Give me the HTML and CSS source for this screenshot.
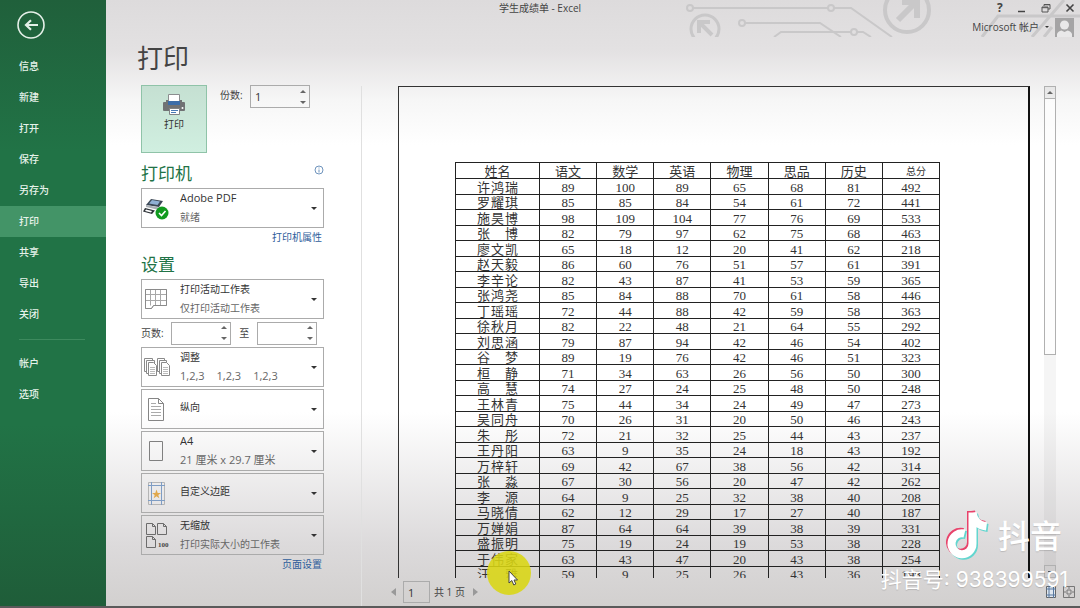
FILE: index.html
```html
<!DOCTYPE html>
<html lang="zh-CN">
<head>
    <meta charset="UTF-8">
    <meta name="viewport" content="width=device-width, initial-scale=1.0">

    <title>学生成绩单 - Excel</title>
    <link rel="stylesheet" href="styles.css">
</head>
<body>
<div class="app">
    <nav class="sidebar">
        <button class="back" aria-label="返回">
            <svg width="28" height="28" viewBox="0 0 28 28" fill="none" stroke="#e4f0e8">
                <circle cx="14" cy="14" r="13" stroke-width="1.6"/>
                <path d="M21 14H9M14 9.3L9 14l5 4.7" stroke-width="2.2"/>
            </svg>
        </button>
        <a href="#" class="item">信息</a>
        <a href="#" class="item">新建</a>
        <a href="#" class="item">打开</a>
        <a href="#" class="item">保存</a>
        <a href="#" class="item">另存为</a>
        <a href="#" class="item active">打印</a>
        <a href="#" class="item">共享</a>
        <a href="#" class="item">导出</a>
        <a href="#" class="item">关闭</a>
        <hr class="sep">
        <a href="#" class="item">帐户</a>
        <a href="#" class="item">选项</a>
    </nav>

    <main class="main">
        <header class="topbar">
            <svg class="circuit" width="400" height="37" viewBox="0 0 400 37" fill="none" stroke="#c9c8c9" stroke-width="2">
                <circle cx="10" cy="8" r="3"/>
                <path d="M13 8H148M154 8H171L212 37"/>
                <circle cx="151" cy="8" r="3"/>
                <circle cx="62" cy="23" r="3"/>
                <path d="M65 23H140L161 37M94 37L101 32H171M177 32H183L191 37"/>
                <circle cx="174" cy="32" r="3"/>
                <circle cx="25" cy="29" r="14" stroke-width="3"/>
                <path d="M32 35L20 23M19 33V22H30" stroke-width="4"/>
                <circle cx="227" cy="10" r="22" stroke-width="4"/>
                <path d="M218 20L235 3M222 2H237V18" stroke-width="6"/>
                <path d="M302 37L318 16H400M352 37L384 0M364 37L372 27" stroke-width="3"/>
            </svg>
            <span class="title">学生成绩单 - Excel</span>
            <div class="window-buttons">
                <button aria-label="帮助">?</button>
                <button aria-label="最小化"><svg width="10" height="10" viewBox="0 0 10 10"><path d="M1 8.5H8" stroke="#444" stroke-width="1.5"/></svg></button>
                <button aria-label="还原"><svg width="10" height="10" viewBox="0 0 10 10" fill="none" stroke="#555"><path d="M3 3V1.5H9V6H7M3 1.8H9"/><path d="M1 4H7V9H1ZM1 4.7H7"/></svg></button>
                <button aria-label="关闭"><svg width="10" height="10" viewBox="0 0 10 10"><path d="M1.5 1.5L8.5 8.5M8.5 1.5L1.5 8.5" stroke="#444" stroke-width="1.6"/></svg></button>
            </div>
            <button class="account">
                Microsoft 帐户
                <span class="caret small"></span>
                <svg width="19" height="19" viewBox="0 0 19 19">
                    <path d="M0 0H19V19H0Z" fill="#a5a4a5"/>
                    <circle cx="9.500" cy="7" r="4.500" fill="#e9e8e9"/>
                    <path d="M2 19V16Q3 13 6.500 12.500L9.500 14L12.500 12.500Q16 13 17 16V19Z" fill="#e9e8e9"/>
                </svg>
            </button>
        </header>

        <h1>打印</h1>

        <div class="columns">
            <section class="settings">
                <div class="print-row">
                    <button class="print">
                        <svg width="24" height="22" viewBox="0 0 24 22">
                            <path d="M2 8H22Q23 8 23 9V16Q23 17 22 17H2Q1 17 1 16V9Q1 8 2 8Z" fill="#707274"/>
                            <path d="M4 6H20V10H4Z" fill="#707274"/>
                            <path d="M6.500 .5H17.500V8H6.500Z" fill="#fff" stroke="#8b8d8f"/>
                            <path d="M6 7H18V11H6Z" fill="#3c6da8"/>
                            <path d="M7.500 14.500H17.500V20.500H7.500Z" fill="#fff" stroke="#808284"/>
                            <path d="M9 16.500H16M9 18.500H14" stroke="#4a7ab5"/>
                            <circle cx="20.500" cy="14" r="1" fill="#fff"/>
                        </svg>
                        打印
                    </button>
                    <label for="copies">份数:</label>
                    <div class="spin"><input id="copies" type="number" value="1"><span class="arrows"></span></div>
                </div>

                <div class="heading">
                    <h2>打印机</h2>
                    <svg width="10" height="10" viewBox="0 0 10 10" fill="none" stroke="#6f94bd"><circle cx="5" cy="5" r="4"/><path d="M5 4.500V7.500M5 2.500V3.500"/></svg>
                </div>
                <div class="combo">
                    <svg width="30" height="26" viewBox="0 0 30 26">
                        <path d="M9 4L21 6L17 12L4 10Z" fill="#3c4856"/>
                        <path d="M10 5L18 6.500L15.500 10L7 8.500Z" fill="#8fb0d4"/>
                        <path d="M4 10L17 12.500V15L4 12Z" fill="#aab0b6"/>
                        <path d="M3 13L13 15.500L10 19L1 16.500Z" fill="#2e3338"/>
                        <path d="M4 14.500L10 16L9 17.500L3 16Z" fill="#fff"/>
                        <circle cx="20" cy="18" r="6.500" fill="#119a1f"/>
                        <path d="M17 18L19.500 20.500L23.500 16" stroke="#fff" stroke-width="1.6" fill="none"/>
                    </svg>
                    <select class="latin" aria-label="打印机"><option>Adobe PDF</option></select>
                    <span class="desc">就绪</span>
                    <span class="caret"></span>
                </div>
                <a href="#" class="link">打印机属性</a>

                <div class="heading"><h2>设置</h2></div>
                <div class="combo">
                    <svg width="30" height="26" viewBox="0 0 30 26" fill="none" stroke="#8a8a8a">
                        <path d="M3.500 3.500H24.500V19.500H11.500L9.500 22.500H3.500ZM3.500 8.500H24.500M3.500 14.500H24.500M8.500 3.500V19.500M13.500 3.500V19.500M18.500 3.500V19.500" stroke="#a8a8a8"/>
                        <path d="M3.500 22.500V3.500H24.500V19.500H11.500L9.500 22.500Z"/>
                    </svg>
                    <select aria-label="打印范围"><option>打印活动工作表</option></select>
                    <span class="desc">仅打印活动工作表</span>
                    <span class="caret"></span>
                </div>
                <div class="pages">
                    <label for="from">页数:</label>
                    <div class="spin"><input id="from" type="number"><span class="arrows"></span></div>
                    <label for="to">至</label>
                    <div class="spin"><input id="to" type="number"><span class="arrows"></span></div>
                </div>
                <div class="stack">
                    <div class="combo">
                        <svg width="30" height="26" viewBox="0 0 30 26" fill="#fff" stroke="#8a8a8a">
                            <path d="M2.500 4.500H10.500V17.500H2.500Z"/><path d="M4.500 6.500H12.500V19.500H4.500Z"/><path d="M6.500 8.500H11.500L14.500 11.500V21.500H6.500Z"/>
                            <path d="M15.500 4.500H22.500V17.500H15.500Z"/><path d="M17.500 6.500H24.500V19.500H17.500Z"/><path d="M19.500 8.500H24.500L27.500 11.500V21.500H19.500Z"/>
                            <path d="M8 13.500H13M8 15.500H13M8 17.500H13M8 19.500H13M21 13.500H26M21 15.500H26M21 17.500H26M21 19.500H26" stroke="#bbb"/>
                        </svg>
                        <select aria-label="调整"><option>调整</option></select>
                        <span class="desc latin triple"><span>1,2,3</span><span>1,2,3</span><span>1,2,3</span></span>
                        <span class="caret"></span>
                    </div>
                    <div class="combo single">
                        <svg width="30" height="26" viewBox="0 0 30 26" fill="none" stroke="#858585">
                            <path d="M6.500 2.500H16.500L21.500 7.500V24.500H6.500ZM16.500 2.500V7.500H21.500"/>
                            <path d="M9 7.500H14M9 10.500H19M9 13.500H19M9 16.500H19M9 19.500H19" stroke="#aaa"/>
                        </svg>
                        <select aria-label="方向"><option>纵向</option></select>
                        <span class="caret"></span>
                    </div>
                    <div class="combo">
                        <svg width="30" height="26" viewBox="0 0 30 26"><path d="M7.500 3.500H20.500V22.500H7.500Z" fill="none" stroke="#808080"/></svg>
                        <select class="latin" aria-label="纸张"><option>A4</option></select>
                        <span class="desc latin">21 厘米 x 29.7 厘米</span>
                        <span class="caret"></span>
                    </div>
                    <div class="combo single">
                        <svg width="30" height="26" viewBox="0 0 30 26" fill="none">
                            <path d="M6.500 2.500H22.500V24.500H6.500Z" stroke="#b5b5b5"/>
                            <path d="M9.500 2V25M19.500 2V25M6 5.500H23M6 20.500H23" stroke="#7f9dc4"/>
                            <path d="M14.500 9.500L15.700 13H19L16.300 15L17.300 18.300L14.500 16.300L11.700 18.300L12.700 15L10 13H13.300Z" fill="#e0a84c"/>
                        </svg>
                        <select aria-label="边距"><option>自定义边距</option></select>
                        <span class="caret"></span>
                    </div>
                    <div class="combo">
                        <svg width="30" height="28" viewBox="0 0 30 28" fill="none" stroke="#6c6c6c">
                            <path d="M4.500 2.500H10.500L13.500 5.500V13.500H4.500ZM10.500 2.500V5.500H13.500M15.500 2.500H21.500L24.500 5.500V13.500H15.500ZM21.500 2.500V5.500H24.500M4.500 15.500H10.500L13.500 18.500V26.500H4.500ZM10.500 15.500V18.500H13.500"/>
                            <text x="16" y="26" class="tiny">100</text>
                        </svg>
                        <select aria-label="缩放"><option>无缩放</option></select>
                        <span class="desc">打印实际大小的工作表</span>
                        <span class="caret"></span>
                    </div>
                </div>
                <a href="#" class="link">页面设置</a>
            </section>

            <section class="preview">
                <div class="view">
                    <div class="paper">
                        <table class="scores">
                            <thead><tr><th class="name-col">姓名</th><th>语文</th><th>数学</th><th>英语</th><th>物理</th><th>思品</th><th>历史</th><th class="total">总分</th></tr></thead>
                            <tbody id="rows"></tbody>
                        </table>
                    </div>
                    <div class="scrollbar">
                        <button aria-label="向上"><span class="up"></span></button>
                        <div class="thumb"></div>
                        <button aria-label="向下"><span class="dash"></span></button>
                    </div>
                </div>
                <footer class="pager">
                    <button class="prev" aria-label="上一页"></button>
                    <input type="text" value="1" aria-label="页码">
                    <span>共 1 页</span>
                    <button class="next" aria-label="下一页"></button>
                    <div class="tools">
                        <button aria-label="显示边距"><svg width="12" height="12" viewBox="0 0 12 12" fill="none" stroke="#666"><path d="M1.500 .5H10.500V11.500H1.500Z" fill="#dfe7f0"/><path d="M4 0V12M8.500 0V12M1 3H11M1 9H11" stroke="#58799f"/></svg></button>
                        <button aria-label="缩放到页面"><svg width="12" height="12" viewBox="0 0 12 12" fill="none" stroke="#777"><path d="M.5 .5H11.500V11.500H.5Z"/><path d="M4 4H8V8H4Z"/><path d="M6 1V3M6 9V11M1 6H3M9 6H11"/></svg></button>
                    </div>
                </footer>
            </section>
        </div>
    </main>

    <div class="pointer">
        <svg width="10" height="16" viewBox="0 0 10 16"><path d="M1 1V13L3.800 10.500L5.800 15L7.800 14L6 10H9.500Z" fill="#fff" stroke="#444"/></svg>
    </div>

    <div class="watermark">
        <div class="brand">
            <svg width="44" height="50" viewBox="0 0 44 50" fill="none" stroke-width="8">
                <path d="M26 2V33A10.500 10.500 0 1 1 18 23M26 2C27 10 32 15 40 16" stroke="#e8436b" transform="translate(-1 -1)"/>
                <path d="M26 2V33A10.500 10.500 0 1 1 18 23M26 2C27 10 32 15 40 16" stroke="#63d6cf" transform="translate(2 2)"/>
                <path d="M26 2V33A10.500 10.500 0 1 1 18 23M26 2C27 10 32 15 40 16" stroke="#fff" transform="translate(.5 .5)"/>
            </svg>
            <span>抖音</span>
        </div>
        <div class="handle">抖音号: 938399591</div>
    </div>
</div>

<script>
    const scores = [
        ['许鸿瑞', 89, 100, 89, 65, 68, 81, 492],
        ['罗耀琪', 85, 85, 84, 54, 61, 72, 441],
        ['施昊博', 98, 109, 104, 77, 76, 69, 533],
        ['张 博', 82, 79, 97, 62, 75, 68, 463],
        ['廖文凯', 65, 18, 12, 20, 41, 62, 218],
        ['赵天毅', 86, 60, 76, 51, 57, 61, 391],
        ['李辛论', 82, 43, 87, 41, 53, 59, 365],
        ['张鸿尧', 85, 84, 88, 70, 61, 58, 446],
        ['丁瑶瑶', 72, 44, 88, 42, 59, 58, 363],
        ['徐秋月', 82, 22, 48, 21, 64, 55, 292],
        ['刘思涵', 79, 87, 94, 42, 46, 54, 402],
        ['谷 梦', 89, 19, 76, 42, 46, 51, 323],
        ['桓 静', 71, 34, 63, 26, 56, 50, 300],
        ['高 慧', 74, 27, 24, 25, 48, 50, 248],
        ['王林青', 75, 44, 34, 24, 49, 47, 273],
        ['吴同舟', 70, 26, 31, 20, 50, 46, 243],
        ['朱 彤', 72, 21, 32, 25, 44, 43, 237],
        ['王丹阳', 63, 9, 35, 24, 18, 43, 192],
        ['万梓轩', 69, 42, 67, 38, 56, 42, 314],
        ['张 淼', 67, 30, 56, 20, 47, 42, 262],
        ['李 源', 64, 9, 25, 32, 38, 40, 208],
        ['马晓倩', 62, 12, 29, 17, 27, 40, 187],
        ['万婵娟', 87, 64, 64, 39, 38, 39, 331],
        ['盛振明', 75, 19, 24, 19, 53, 38, 228],
        ['于伟家', 63, 43, 47, 20, 43, 38, 254],
        ['汪 雅', 59, 9, 25, 26, 43, 36, 198]
    ];

    document.getElementById('rows').innerHTML = scores.map(([name, ...marks]) =>
        `<tr><td><span class="name">${name}</span></td>${marks.map(m => `<td>${m}</td>`).join('')}</tr>`
    ).join('');
</script>
</body>
</html>
```
FILE: styles.css
```css
* { box-sizing: border-box; }
body { margin: 0; font-family: "Open Sans", "Noto Sans CJK SC", sans-serif; font-size: 10px; line-height: 16px; color: #444; }
h1, h2 { margin: 0; font-weight: 400; }
button { border: 0; padding: 0; background: none; color: inherit; font: inherit; }
a { text-decoration: none; }
svg { display: block; flex: none; }

.app { position: relative; display: flex; height: 100vh; overflow: hidden; border-bottom: 2px solid #5a5a5a; }

/* sidebar */
.sidebar { width: 106px; flex: none; padding-top: 11px; background: linear-gradient(#20603b, #217346 25%, #217346 70%, #1f5d39); }
.back { display: block; margin: 0 0 12px 17px; }
.item { display: block; height: 31px; padding-left: 19px; line-height: 31px; color: #e6f2ea; font-weight: 500; }
.item.active { background: #439467; }
.sep { height: 1px; margin: 9px 21px 8px 19px; border: 0; background: #3d8a5e; }

/* main */
.main { flex: 1; min-width: 0; display: flex; flex-direction: column; background: linear-gradient(#dddbdc 0, #e3e1e2 50px, #f6f6f6 100px, #fff 145px, #fff 68%, #dcdadb 90%, #d2d0cf); }
.topbar { position: relative; display: grid; grid-template-columns: 1fr 106px; grid-template-rows: 16px 22px; height: 38px; flex: none; }
.circuit { position: absolute; top: 0; right: 0; }
.title { position: relative; text-align: center; }
.window-buttons { position: relative; display: flex; justify-content: space-between; align-items: center; padding: 0 5px 0 23px; }
.window-buttons button { font-size: 12px; font-weight: 700; }
.account { position: relative; grid-column: 1 / 3; justify-self: end; display: flex; align-items: center; gap: 6px; margin-right: 6px; }
.main h1 { flex: none; height: 48px; padding-left: 31px; font-size: 26px; line-height: 40px; }
.columns { flex: 1; min-height: 0; display: flex; }

/* settings */
.settings { width: 256px; flex: none; padding: 0 37px 0 35px; border-right: 1px solid #e0e0e0; }
.print-row { display: flex; align-items: flex-start; }
.print { display: flex; flex-direction: column; align-items: center; width: 66px; height: 68px; margin: -1px 13px 0 0; padding-bottom: 20px; justify-content: flex-end; border: 1px solid #8fc3a8; background: linear-gradient(#c5e0d2, #d0efe0); color: #333; }
.print-row label { width: 30px; line-height: 18px; }
.spin { display: flex; align-items: center; width: 60px; height: 23px; padding-right: 3px; border: 1px solid #ababab; }
.print-row .spin { margin-top: -1px; }
.spin input { flex: 1; min-width: 0; padding: 0 0 0 4px; border: 0; outline: 0; background: none; color: #333; font: inherit; font-size: 11px; appearance: textfield; }
.spin input::-webkit-inner-spin-button { appearance: none; }
.arrows { display: flex; flex-direction: column; gap: 8px; }
.arrows::before, .arrows::after { content: ""; border: 3px solid transparent; }
.arrows::before { border-top: 0; border-bottom-color: #666; }
.arrows::after { border-bottom: 0; border-top-color: #666; }
.heading { display: flex; justify-content: space-between; height: 35px; padding-top: 12px; }
.heading h2 { color: #217346; font-size: 17px; line-height: 18px; }
.link + .heading { padding-top: 9px; height: 32px; }
.link { display: block; height: 19px; padding-right: 2px; line-height: 18px; text-align: right; color: #2f5e9b; }

.combo { display: grid; grid-template-columns: 38px 1fr 12px; grid-template-rows: 18px 20px; align-items: center; height: 40px; border: 1px solid #ababab; }
.combo svg { grid-area: 1 / 1 / 3 / 2; }
.combo select { grid-area: 1 / 1 / 3 / 4; width: 100%; height: 38px; padding: 0 12px 20px 38px; border: 0; outline: 0; background: none; color: #333; font: inherit; appearance: none; }
.combo.single select { padding-bottom: 5px; }
.combo .desc { grid-area: 2 / 2; line-height: 18px; color: #666; white-space: nowrap; pointer-events: none; }
.combo .caret { grid-area: 1 / 3 / 3 / 4; pointer-events: none; }
.combo .latin { font-size: 11px; }
.triple { display: flex; gap: 12px; }
.tiny { font: 700 7px "Liberation Serif", serif; fill: #444; stroke: none; }
.caret { width: 0; border: 3px solid transparent; border-top-color: #333; border-bottom: 0; }
.caret.small { border-width: 2px 2px 0; }
.pages { display: flex; align-items: center; justify-content: space-between; height: 28px; padding-right: 7px; }
.pages label { line-height: 22px; }
.stack { display: grid; gap: 2px; }

/* preview */
.preview { flex: 1; min-width: 0; display: flex; flex-direction: column; }
.view { flex: 1; min-height: 0; display: flex; gap: 14px; padding: 0 24px 0 36px; overflow: hidden; }
.paper { flex: 1; height: 893px; padding: 75px 88px 0 56px; border: 1px solid #333; border-right: 2px solid #111; }
.scores { width: 100%; table-layout: fixed; border-collapse: collapse; color: #333; font: 13px/12px "Liberation Serif", "Noto Sans CJK SC", serif; text-align: center; }
.scores th, .scores td { padding: 2px 0 0; border: 1px solid #222; font-weight: 400; }
.scores tr { height: 15px; }
.scores tr:nth-child(odd) { height: 16px; }
.scores .name-col { width: 84px; }
.scores .total { padding-left: 10px; font-size: 10px; }
.name { display: block; width: 41px; height: 12px; margin: 0 auto; text-align-last: justify; }
.scrollbar { width: 12px; display: flex; flex-direction: column; background: rgba(0, 0, 0, .04); }
.scrollbar button { display: grid; place-items: center; height: 13px; border: 1px solid #b0b0b0; }
.up { border: 3px solid transparent; border-top: 0; border-bottom-color: #666; }
.dash { width: 5px; height: 1px; background: #555; }
.thumb { height: 256px; margin-bottom: auto; border: 1px solid #b0b0b0; border-top: 0; background: rgba(255, 255, 255, .8); }
.pager { display: flex; align-items: center; height: 28px; flex: none; padding: 0 5px 0 29px; }
.pager input { width: 27px; height: 22px; margin: 0 4px 0 7px; padding: 0 4px; border: 1px solid #ababab; background: none; color: #333; font: inherit; font-size: 11px; }
.prev, .next { border: 4px solid transparent; }
.prev { border-left: 0; border-right: 5px solid #999; }
.next { margin-left: 8px; border-right: 0; border-left: 5px solid #999; }
.tools { display: flex; gap: 6px; margin-left: auto; }

/* mouse highlight */
.pointer { position: absolute; left: 487px; top: 551px; width: 44px; height: 44px; padding: 19px 0 0 21px; border-radius: 50%; background: rgba(218, 214, 18, .88); }

.watermark { position: absolute; right: 12px; bottom: 14px; color: #fff; font-family: Inter, "Noto Sans CJK SC", sans-serif; text-shadow: 0 1px 1px rgba(0, 0, 0, .15); pointer-events: none; }
.brand { display: flex; align-items: flex-end; justify-content: flex-end; gap: 8px; padding-right: 6px; font-size: 32px; line-height: 46px; font-weight: 500; }
.handle { margin-top: 8px; font-size: 21px; line-height: 24px; }
```
